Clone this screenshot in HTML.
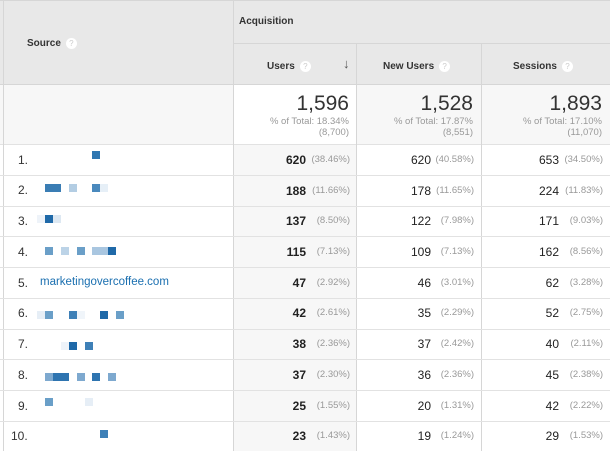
<!DOCTYPE html>
<html><head><meta charset="utf-8"><style>
*{margin:0;padding:0;box-sizing:border-box}
body{width:610px;height:451px;overflow:hidden;background:#fff;font-family:"Liberation Sans",Arial,sans-serif;position:relative;color:#222}
.a{position:absolute}
.hl{position:absolute;height:1px;background:#e2e2e2}
.vl{position:absolute;width:1px;background:#d6d6d6}
.hdr{font-size:10px;font-weight:bold;color:#333}
.q{display:inline-block;width:11px;height:11px;border-radius:50%;background:#fff;color:#ccc;font-size:8px;text-align:center;line-height:11px;margin-left:5px;vertical-align:0px;font-weight:normal}
.tot{position:absolute;text-align:right;font-size:21px;color:#333}
.sm{font-size:9.5px;color:#999;line-height:11px}
.n{position:absolute;font-size:12px;text-align:right}
.p{position:absolute;font-size:9.5px;color:#999;text-align:right}
.b{position:absolute;height:8px;width:8px}
.idx{position:absolute;left:18px;font-size:12px;color:#333}
</style></head><body>
<div class="a" style="left:0;top:0;width:610px;height:84px;background:#e8e8e8"></div>
<div class="a" style="left:0;top:84px;width:610px;height:60px;background:#f7f7f7"></div>
<div class="a" style="left:233px;top:84px;width:123px;height:60px;background:#fff"></div>
<div class="a" style="left:233px;top:144px;width:123px;height:307px;background:#f7f7f7"></div>
<div class="hl" style="left:0;top:0;width:610px;background:#d6d6d6"></div>
<div class="hl" style="left:233px;top:43px;width:377px;background:#d6d6d6"></div>
<div class="hl" style="left:0;top:84px;width:610px;background:#d6d6d6"></div>
<div class="hl" style="left:0;top:144px;width:610px"></div>
<div class="vl" style="left:3px;top:0;height:451px"></div>
<div class="vl" style="left:233px;top:0;height:451px"></div>
<div class="vl" style="left:356px;top:43px;height:408px"></div>
<div class="vl" style="left:481px;top:43px;height:408px"></div>
<div class="a hdr" style="left:27px;top:38px">Source<span class="q">?</span></div>
<div class="a hdr" style="left:239px;top:16px">Acquisition</div>
<div class="a hdr" style="left:267px;top:61px">Users<span class="q">?</span></div>
<div class="a" style="left:343px;top:56px;font-size:13px;color:#555">&#8595;</div>
<div class="a hdr" style="left:383px;top:61px">New Users<span class="q">?</span></div>
<div class="a hdr" style="left:513px;top:61px">Sessions<span class="q">?</span></div>
<div class="tot" style="right:261px;top:92px">1,596<div class="sm">% of Total: 18.34%<br>(8,700)</div></div>
<div class="tot" style="right:137px;top:92px">1,528<div class="sm">% of Total: 17.87%<br>(8,551)</div></div>
<div class="tot" style="right:8px;top:92px">1,893<div class="sm">% of Total: 17.10%<br>(11,070)</div></div>
<div class="hl" style="left:0;top:175px;width:610px"></div>
<div class="hl" style="left:0;top:206px;width:610px"></div>
<div class="hl" style="left:0;top:236px;width:610px"></div>
<div class="hl" style="left:0;top:267px;width:610px"></div>
<div class="hl" style="left:0;top:298px;width:610px"></div>
<div class="hl" style="left:0;top:329px;width:610px"></div>
<div class="hl" style="left:0;top:359px;width:610px"></div>
<div class="hl" style="left:0;top:390px;width:610px"></div>
<div class="hl" style="left:0;top:421px;width:610px"></div>

<div class="idx" style="top:153px">1.</div>
<div class="idx" style="top:183px">2.</div>
<div class="idx" style="top:214px">3.</div>
<div class="idx" style="top:245px">4.</div>
<div class="idx" style="top:276px">5.</div>
<div class="idx" style="top:306px">6.</div>
<div class="idx" style="top:337px">7.</div>
<div class="idx" style="top:368px">8.</div>
<div class="idx" style="top:399px">9.</div>
<div class="idx" style="top:429px;left:11px">10.</div>
<div class="a" style="left:40px;top:276px;font-size:11.5px;color:#1a6fb0">marketingovercoffee.com</div>

<div class="b" style="left:92px;top:151px;background:#2f77b1"></div>
<div class="b" style="left:45px;top:184px;width:16px;background:#3a7db4"></div>
<div class="b" style="left:69px;top:184px;background:#b3cde3"></div>
<div class="b" style="left:92px;top:184px;background:#4a89bd"></div>
<div class="b" style="left:100px;top:184px;background:#e6eff7"></div>
<div class="b" style="left:37px;top:215px;background:#eef3f9"></div>
<div class="b" style="left:45px;top:215px;background:#1f69a8"></div>
<div class="b" style="left:53px;top:215px;background:#dde8f2"></div>
<div class="b" style="left:45px;top:247px;background:#6a9fc8"></div>
<div class="b" style="left:61px;top:247px;background:#bcd3e7"></div>
<div class="b" style="left:77px;top:247px;background:#6a9fc8"></div>
<div class="b" style="left:92px;top:247px;width:16px;background:#a9c6e0"></div>
<div class="b" style="left:108px;top:247px;background:#1f69a8"></div>
<div class="b" style="left:37px;top:311px;background:#e6eef6"></div>
<div class="b" style="left:45px;top:311px;background:#6a9fc8"></div>
<div class="b" style="left:69px;top:311px;background:#3e80b7"></div>
<div class="b" style="left:77px;top:311px;background:#f0f5fa"></div>
<div class="b" style="left:100px;top:311px;background:#1f69a8"></div>
<div class="b" style="left:116px;top:311px;background:#6a9fc8"></div>
<div class="b" style="left:61px;top:342px;background:#eef3f9"></div>
<div class="b" style="left:69px;top:342px;background:#1f69a8"></div>
<div class="b" style="left:85px;top:342px;background:#3e80b7"></div>
<div class="b" style="left:45px;top:373px;background:#7ea9cf"></div>
<div class="b" style="left:53px;top:373px;width:16px;background:#2e74b0"></div>
<div class="b" style="left:77px;top:373px;background:#7ea9cf"></div>
<div class="b" style="left:92px;top:373px;background:#2e74b0"></div>
<div class="b" style="left:108px;top:373px;background:#7ea9cf"></div>
<div class="b" style="left:45px;top:398px;background:#6a9fc8"></div>
<div class="b" style="left:85px;top:398px;background:#e6eef6"></div>
<div class="b" style="left:100px;top:430px;background:#3e80b7"></div>

<div>
<div class="n" style="left:0;width:306px;top:153px;font-weight:bold">620</div><div class="p" style="left:0;width:350px;top:154px">(38.46%)</div><div class="n" style="left:0;width:431px;top:153px">620</div><div class="p" style="left:0;width:474px;top:154px">(40.58%)</div><div class="n" style="left:0;width:559px;top:153px">653</div><div class="p" style="left:0;width:603px;top:154px">(34.50%)</div>
<div class="n" style="left:0;width:306px;top:184px;font-weight:bold">188</div><div class="p" style="left:0;width:350px;top:185px">(11.66%)</div><div class="n" style="left:0;width:431px;top:184px">178</div><div class="p" style="left:0;width:474px;top:185px">(11.65%)</div><div class="n" style="left:0;width:559px;top:184px">224</div><div class="p" style="left:0;width:603px;top:185px">(11.83%)</div>
<div class="n" style="left:0;width:306px;top:214px;font-weight:bold">137</div><div class="p" style="left:0;width:350px;top:215px">(8.50%)</div><div class="n" style="left:0;width:431px;top:214px">122</div><div class="p" style="left:0;width:474px;top:215px">(7.98%)</div><div class="n" style="left:0;width:559px;top:214px">171</div><div class="p" style="left:0;width:603px;top:215px">(9.03%)</div>
<div class="n" style="left:0;width:306px;top:245px;font-weight:bold">115</div><div class="p" style="left:0;width:350px;top:246px">(7.13%)</div><div class="n" style="left:0;width:431px;top:245px">109</div><div class="p" style="left:0;width:474px;top:246px">(7.13%)</div><div class="n" style="left:0;width:559px;top:245px">162</div><div class="p" style="left:0;width:603px;top:246px">(8.56%)</div>
<div class="n" style="left:0;width:306px;top:276px;font-weight:bold">47</div><div class="p" style="left:0;width:350px;top:277px">(2.92%)</div><div class="n" style="left:0;width:431px;top:276px">46</div><div class="p" style="left:0;width:474px;top:277px">(3.01%)</div><div class="n" style="left:0;width:559px;top:276px">62</div><div class="p" style="left:0;width:603px;top:277px">(3.28%)</div>
<div class="n" style="left:0;width:306px;top:306px;font-weight:bold">42</div><div class="p" style="left:0;width:350px;top:307px">(2.61%)</div><div class="n" style="left:0;width:431px;top:306px">35</div><div class="p" style="left:0;width:474px;top:307px">(2.29%)</div><div class="n" style="left:0;width:559px;top:306px">52</div><div class="p" style="left:0;width:603px;top:307px">(2.75%)</div>
<div class="n" style="left:0;width:306px;top:337px;font-weight:bold">38</div><div class="p" style="left:0;width:350px;top:338px">(2.36%)</div><div class="n" style="left:0;width:431px;top:337px">37</div><div class="p" style="left:0;width:474px;top:338px">(2.42%)</div><div class="n" style="left:0;width:559px;top:337px">40</div><div class="p" style="left:0;width:603px;top:338px">(2.11%)</div>
<div class="n" style="left:0;width:306px;top:368px;font-weight:bold">37</div><div class="p" style="left:0;width:350px;top:369px">(2.30%)</div><div class="n" style="left:0;width:431px;top:368px">36</div><div class="p" style="left:0;width:474px;top:369px">(2.36%)</div><div class="n" style="left:0;width:559px;top:368px">45</div><div class="p" style="left:0;width:603px;top:369px">(2.38%)</div>
<div class="n" style="left:0;width:306px;top:399px;font-weight:bold">25</div><div class="p" style="left:0;width:350px;top:400px">(1.55%)</div><div class="n" style="left:0;width:431px;top:399px">20</div><div class="p" style="left:0;width:474px;top:400px">(1.31%)</div><div class="n" style="left:0;width:559px;top:399px">42</div><div class="p" style="left:0;width:603px;top:400px">(2.22%)</div>
<div class="n" style="left:0;width:306px;top:429px;font-weight:bold">23</div><div class="p" style="left:0;width:350px;top:430px">(1.43%)</div><div class="n" style="left:0;width:431px;top:429px">19</div><div class="p" style="left:0;width:474px;top:430px">(1.24%)</div><div class="n" style="left:0;width:559px;top:429px">29</div><div class="p" style="left:0;width:603px;top:430px">(1.53%)</div>
</div>
</body></html>
